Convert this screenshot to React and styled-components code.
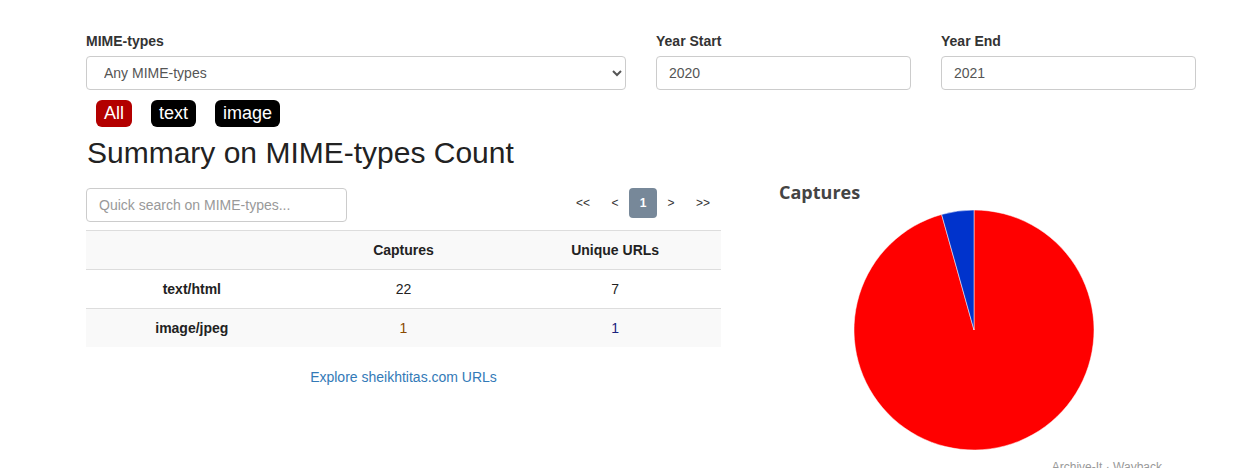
import React from 'react';
import styled, { createGlobalStyle } from 'styled-components';

const GlobalStyle = createGlobalStyle`
  body {
    margin: 0;
    background: #fff;
    font-family: "Liberation Sans", Arial, sans-serif;
    font-size: 14px;
    color: #333;
  }
`;

const Page = styled.div`
  width: 1110px;
  padding: 31px 0 0 86px;
`;

const FilterRow = styled.div`
  display: grid;
  grid-template-columns: 540px 255px 255px;
  column-gap: 30px;
`;

const Field = styled.div`
  display: flex;
  flex-direction: column;
`;

const Label = styled.label`
  font-weight: bold;
  font-size: 14px;
  line-height: 20px;
  margin-bottom: 5px;
  color: #333;
`;

const Select = styled.select`
  height: 34px;
  border: 1px solid #ccc;
  border-radius: 4px;
  padding: 0 8px 0 13px;
  font-family: "Liberation Sans", Arial, sans-serif;
  font-size: 14px;
  color: #555;
  background: #fff;
`;

const Input = styled.input`
  height: 34px;
  box-sizing: border-box;
  border: 1px solid #ccc;
  border-radius: 4px;
  padding: 0 12px;
  font-family: "Liberation Sans", Arial, sans-serif;
  font-size: 14px;
  color: #555;
  width: ${props => props.width || '100%'};
  &::placeholder {
    color: #999;
  }
`;

const Badges = styled.div`
  display: flex;
  gap: 19px;
  padding-left: 10px;
  margin-top: 10px;
`;

const Badge = styled.span`
  display: inline-flex;
  align-items: center;
  height: 27px;
  padding: 0 8px;
  border-radius: 6px;
  font-size: 18px;
  color: #fff;
  background: ${props => (props.active ? '#b30000' : '#000')};
`;

const Heading = styled.h2`
  margin: 7px 0 0 1px;
  font-size: 30px;
  font-weight: 500;
  line-height: 37px;
  color: #222;
`;

const Row = styled.div`
  display: grid;
  grid-template-columns: 635px 445px;
  column-gap: 30px;
  margin-top: 7px;
`;

const LeftCol = styled.div`
  padding-top: 10px;
`;

const Toolbar = styled.div`
  display: flex;
  justify-content: space-between;
  align-items: flex-start;
  margin-bottom: 8px;
`;

const Pager = styled.div`
  display: flex;
  align-items: center;
`;

const PageItem = styled.span`
  display: inline-flex;
  align-items: center;
  justify-content: center;
  height: 30px;
  width: ${props => (props.wide ? '36px' : '28px')};
  box-sizing: border-box;
  border-radius: 4px;
  font-size: 12px;
  color: ${props => (props.current ? '#fff' : '#333')};
  background: ${props => (props.current ? '#778899' : 'transparent')};
  font-weight: ${props => (props.current ? 'bold' : 'normal')};
`;

const Table = styled.table`
  width: 100%;
  border-collapse: collapse;
  table-layout: fixed;
`;

const Th = styled.th`
  height: 38px;
  padding: 0;
  border-top: 1px solid #ddd;
  border-bottom: 1px solid #ddd;
  background: #f9f9f9;
  font-size: 14px;
  font-weight: bold;
  text-align: center;
  color: #222;
`;

const Tr = styled.tr`
  background: ${props => (props.striped ? '#f9f9f9' : '#fff')};
`;

const Td = styled.td`
  height: 38px;
  padding: 0;
  border-top: 1px solid #ddd;
  text-align: center;
  font-size: 14px;
  font-weight: ${props => (props.bold ? 'bold' : 'normal')};
  color: ${props => props.color || '#222'};
`;

const LinkRow = styled.div`
  text-align: center;
  margin-top: 22px;
`;

const Link = styled.a`
  color: #337ab7;
  text-decoration: none;
  font-size: 14px;
`;

const ChartBox = styled.div`
  display: flex;
  flex-direction: column;
  padding-top: 2px;
`;

const ChartTitle = styled.div`
  font-family: "Open Sans", "Liberation Sans", sans-serif;
  font-weight: bold;
  font-size: 18px;
  color: #444;
  padding-left: 28px;
  line-height: 24px;
  margin-bottom: 2px;
`;

const Credits = styled.div`
  font-size: 12px;
  color: #999;
  text-align: right;
  padding-right: 34px;
  margin-top: 4px;
`;

const rows = [
  { type: 'text/html', captures: 22, urls: 7 },
  { type: 'image/jpeg', captures: 1, urls: 1 },
];

const PieChart = () => {
  const cx = 223;
  const cy = 124;
  const r = 120;
  const total = rows.reduce((s, d) => s + d.captures, 0);
  const angle = (rows[1].captures / total) * Math.PI * 2;
  const ex = cx - r * Math.sin(angle);
  const ey = cy - r * Math.cos(angle);
  return (
    <svg width="445" height="250" viewBox="0 0 445 250">
      <path
        d={`M${cx},${cy} L${ex},${ey} A${r},${r} 0 1,0 ${cx},${cy - r} Z`}
        fill="#ff0000"
        stroke="#fff"
        strokeWidth="0.5"
      />
      <path
        d={`M${cx},${cy} L${cx},${cy - r} A${r},${r} 0 0,0 ${ex},${ey} Z`}
        fill="#0033cc"
        stroke="#fff"
        strokeWidth="0.5"
      />
    </svg>
  );
};

const App = () => {
  return (
    <>
      <GlobalStyle />
      <Page>
        <FilterRow>
          <Field>
            <Label>MIME-types</Label>
            <Select defaultValue="any">
              <option value="any">Any MIME-types</option>
            </Select>
          </Field>
          <Field>
            <Label>Year Start</Label>
            <Input defaultValue="2020" />
          </Field>
          <Field>
            <Label>Year End</Label>
            <Input defaultValue="2021" />
          </Field>
        </FilterRow>

        <Badges>
          <Badge active>All</Badge>
          <Badge>text</Badge>
          <Badge>image</Badge>
        </Badges>

        <Heading>Summary on MIME-types Count</Heading>

        <Row>
          <LeftCol>
            <Toolbar>
              <Input width="261px" placeholder="Quick search on MIME-types..." />
              <Pager>
                <PageItem wide>&lt;&lt;</PageItem>
                <PageItem>&lt;</PageItem>
                <PageItem current>1</PageItem>
                <PageItem>&gt;</PageItem>
                <PageItem wide>&gt;&gt;</PageItem>
              </Pager>
            </Toolbar>
            <Table>
              <thead>
                <tr>
                  <Th />
                  <Th>Captures</Th>
                  <Th>Unique URLs</Th>
                </tr>
              </thead>
              <tbody>
                {rows.map((row, i) => (
                  <Tr key={row.type} striped={i % 2 === 1}>
                    <Td bold>{row.type}</Td>
                    <Td color={i === 1 ? '#8a4a00' : '#222'}>{row.captures}</Td>
                    <Td color={i === 1 ? '#1a237e' : '#222'}>{row.urls}</Td>
                  </Tr>
                ))}
              </tbody>
            </Table>
            <LinkRow>
              <Link href="#">Explore sheikhtitas.com URLs</Link>
            </LinkRow>
          </LeftCol>

          <ChartBox>
            <ChartTitle>Captures</ChartTitle>
            <PieChart />
            <Credits>Archive-It · Wayback</Credits>
          </ChartBox>
        </Row>
      </Page>
    </>
  );
};

export default App;
